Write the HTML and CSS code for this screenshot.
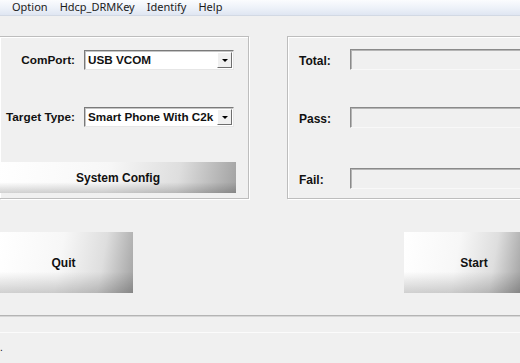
FILE: index.html
```html
<!DOCTYPE html>
<html lang="en">
<head>
  <meta charset="UTF-8">
  <title>Download Tool</title>
  <link rel="stylesheet" href="styles.css">
</head>
<body>
  <div class="menubar">
    <span class="menu-item">Option</span>
    <span class="menu-item">Hdcp_DRMKey</span>
    <span class="menu-item">Identify</span>
    <span class="menu-item">Help</span>
  </div>

  <div class="groups">
    <div class="group group-left">
      <div class="row">
        <label class="label">ComPort:</label>
        <div class="combo">
          <span class="combo-text">USB VCOM</span>
          <span class="combo-btn"><i class="arrow"></i></span>
        </div>
      </div>
      <div class="row row-second">
        <label class="label">Target Type:</label>
        <div class="combo">
          <span class="combo-text">Smart Phone With C2k</span>
          <span class="combo-btn"><i class="arrow"></i></span>
        </div>
      </div>
      <button class="btn btn-config">System Config</button>
    </div>

    <div class="group group-right">
      <div class="stat">
        <label class="label">Total:</label>
        <div class="field"></div>
      </div>
      <div class="stat stat-pass">
        <label class="label">Pass:</label>
        <div class="field"></div>
      </div>
      <div class="stat stat-fail">
        <label class="label">Fail:</label>
        <div class="field"></div>
      </div>
    </div>
  </div>

  <div class="actions">
    <button class="btn btn-big btn-quit">Quit</button>
    <button class="btn btn-big btn-start">Start</button>
  </div>

  <div class="statusbar">
    <div class="progress"></div>
    <div class="status-text">.</div>
  </div>
</body>
</html>
```

FILE: styles.css
```css
* {
  margin: 0;
  padding: 0;
  box-sizing: border-box;
}

html, body {
  width: 520px;
  height: 363px;
  overflow: hidden;
}

body {
  background: #f0f0f0;
  font-family: 'Liberation Sans', Arial, sans-serif;
  color: #111;
}

/* menu */
.menubar {
  height: 16px;
  display: flex;
  align-items: center;
  background: linear-gradient(to bottom, #fbfcfe 0%, #eef2f9 50%, #dfe6f2 100%);
  border-bottom: 1px solid #d2d9e4;
  font-family: 'Noto Sans', sans-serif;
  font-size: 11px;
  color: #1b1b1b;
  padding-left: 12px;
  gap: 12px;
}

.menu-item {
  line-height: 14px;
  margin-top: -2px;
}

/* group boxes (window is cropped: left box has no left edge, right box no right edge) */
.groups {
  display: flex;
  justify-content: space-between;
  margin-top: 20px;
}

.group {
  flex-shrink: 0;
  height: 163px;
  border: 1px solid #bdbdbd;
  box-shadow: 1px 1px 0 #fff, inset 1px 1px 0 #fff;
}

.group-left {
  width: 249px;
  border-left: none;
  padding-top: 13px;
}

.row {
  display: flex;
  align-items: center;
  height: 20px;
}

.row-second {
  margin-top: 37px;
}

.label {
  font-size: 12px;
  font-weight: bold;
}

.row .label {
  width: 75px;
  text-align: right;
  margin-right: 9px;
  font-size: 11.8px;
}

.combo {
  width: 150px;
  height: 20px;
  display: flex;
  background: #fff;
  border: 1px solid;
  border-color: #7a7a7a #e6e6e6 #e6e6e6 #7a7a7a;
  box-shadow: inset 1px 1px 0 #c4c4c4;
}

.combo-text {
  flex: 1;
  font-size: 11.7px;
  font-weight: bold;
  line-height: 17px;
  padding-left: 3px;
  white-space: nowrap;
  overflow: hidden;
}

.combo-btn {
  width: 15px;
  height: 16px;
  margin: 1px 1px 0 0;
  background: #f0f0f0;
  border: 1px solid;
  border-color: #fff #6e6e6e #6e6e6e #fff;
  display: flex;
  align-items: center;
  justify-content: center;
}

.arrow {
  width: 0;
  height: 0;
  border-left: 3px solid transparent;
  border-right: 3px solid transparent;
  border-top: 3px solid #000;
}

/* buttons */
.btn {
  display: block;
  border: none;
  font-family: 'Liberation Sans', Arial, sans-serif;
  font-size: 12px;
  font-weight: bold;
  color: #111;
  background:
    linear-gradient(to bottom, rgba(0, 0, 0, 0) 65%, rgba(0, 0, 0, 0.18) 100%),
    linear-gradient(100deg, #ffffff 0%, #f7f7f7 45%, #dedede 75%, #a2a2a2 100%);
}

.btn-config {
  width: 236px;
  height: 31px;
  margin-top: 35px;
}

/* right group */
.group-right {
  width: 233px;
  border-right: none;
  padding: 12px 0 0 11px;
}

.stat {
  display: flex;
  align-items: center;
  height: 20px;
}

.stat .label {
  width: 51px;
  padding-top: 3px;
}

.stat-pass {
  margin-top: 38px;
}

.stat-fail {
  margin-top: 41px;
}

.field {
  flex: 1;
  height: 21px;
  border: 1px solid;
  border-right: none;
  border-color: #8a8a8a #f8f8f8 #f8f8f8 #8a8a8a;
  box-shadow: inset 1px 1px 0 #b5b5b5;
  background: #f0f0f0;
}

/* big action buttons */
.actions {
  display: flex;
  justify-content: space-between;
  margin-top: 33px;
}

.btn-big {
  flex-shrink: 0;
  height: 61px;
}

.btn-quit {
  width: 133px;
  padding-right: 6px;
}

.btn-start {
  width: 116px;
  padding-left: 24px;
}

/* status bar */
.statusbar {
  margin-top: 22px;
}

.progress {
  height: 18px;
  border-top: 1px solid #b4b4b4;
  border-bottom: 1px solid #fbfbfb;
  box-shadow: inset 0 1px 0 #d6d6d6;
}

.status-text {
  font-size: 10px;
  line-height: 10px;
  margin-top: 10px;
}
```
